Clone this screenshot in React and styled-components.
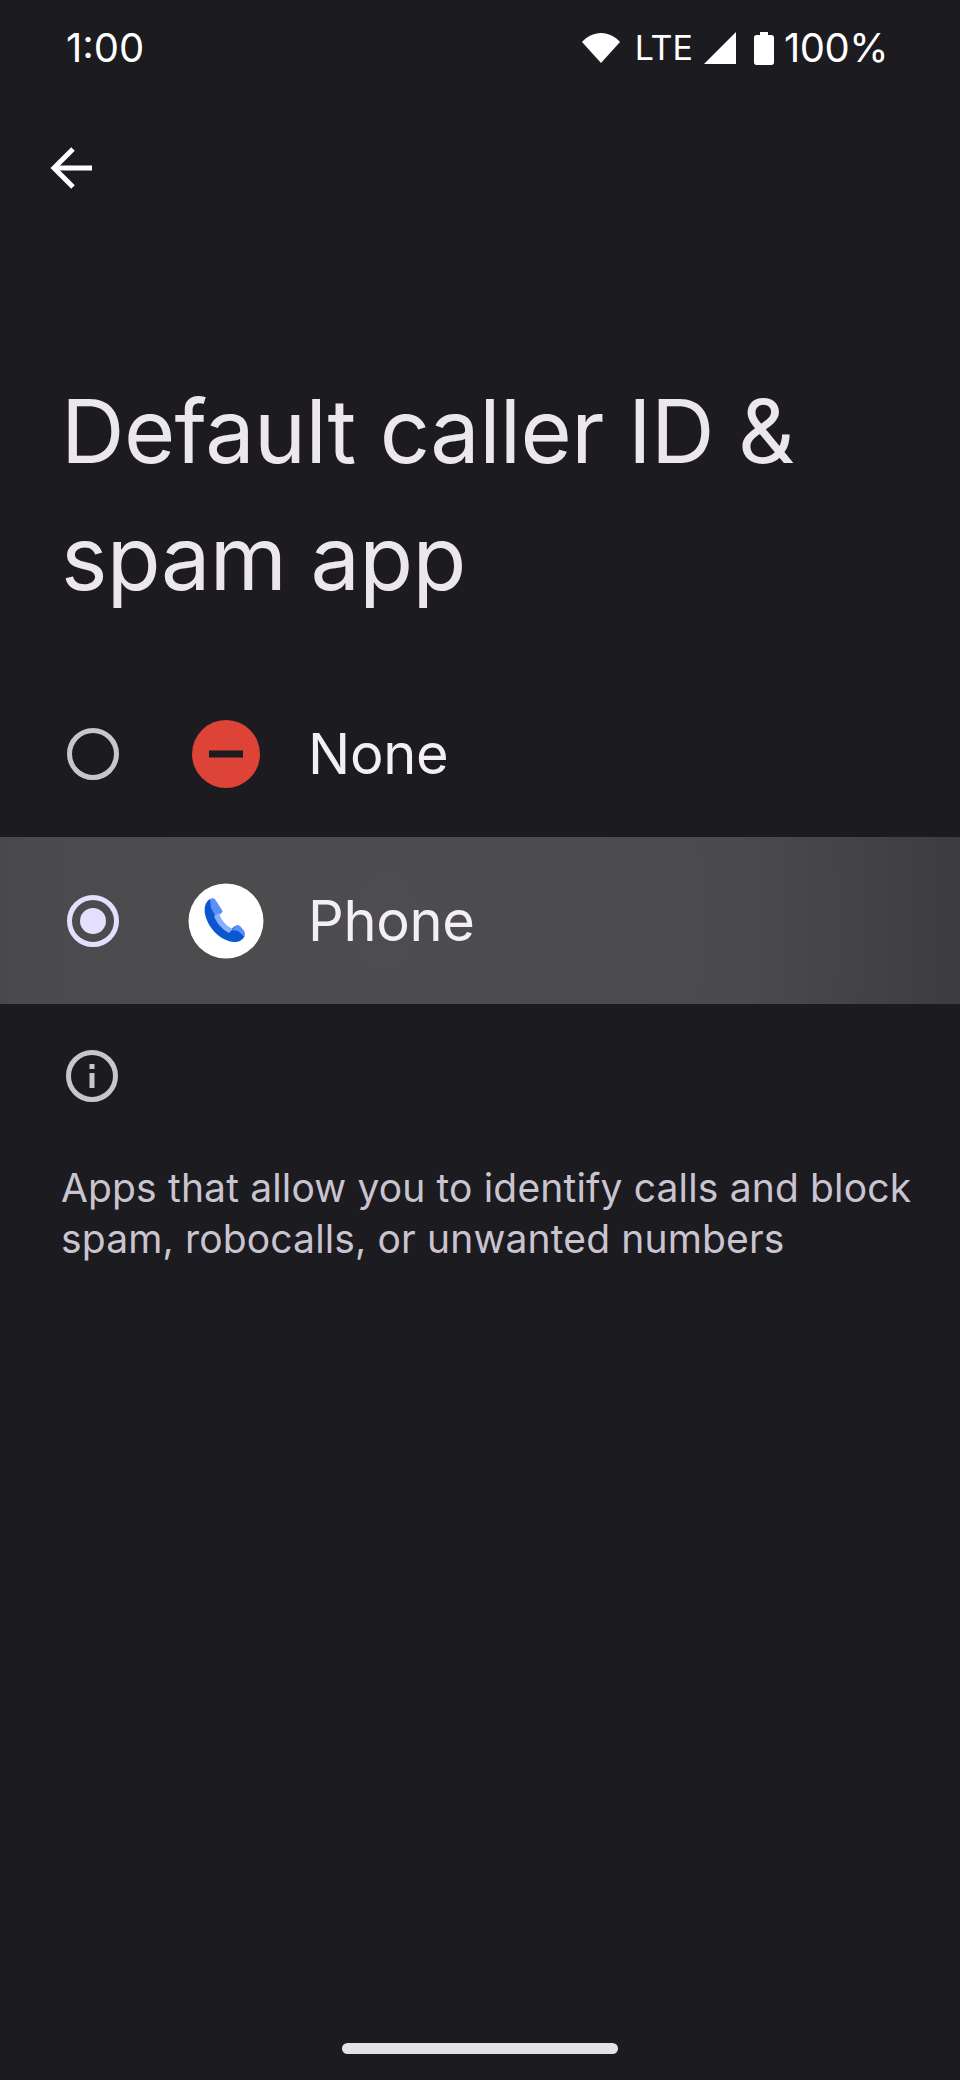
import styled, { createGlobalStyle } from "styled-components";

const GlobalStyle = createGlobalStyle`
  html, body {
    margin: 0;
    padding: 0;
    background: #1c1b20;
  }
`;

const Page = styled.div`
  width: 960px;
  height: 2080px;
  display: flex;
  flex-direction: column;
  background: #1c1b20;
  font-family: "Inter", "Liberation Sans", sans-serif;
  overflow: hidden;
`;

const StatusBar = styled.div`
  height: 96px;
  padding: 0 72px 0 66px;
  box-sizing: border-box;
  display: flex;
  align-items: center;
  justify-content: space-between;
  color: #fff;
  font-size: 40px;
  line-height: 48px;
`;

const StatusIcons = styled.div`
  display: flex;
  align-items: center;
`;

const Lte = styled.span`
  font-size: 34px;
  margin: 0 11px 0 15px;
`;

const Percent = styled.span`
  margin-left: 10px;
  letter-spacing: -0.5px;
`;

const BatterySlot = styled.div`
  display: flex;
  margin-left: 18px;
`;

const BackButton = styled.div`
  height: 72px;
  margin-top: 36px;
  padding: 0 0 0 50px;
  display: flex;
  align-items: center;
`;

const Title = styled.h1`
  margin: 164px 0 0;
  padding: 0 30px 0 61px;
  font-size: 88px;
  line-height: 127px;
  font-weight: 400;
  letter-spacing: -0.6px;
  color: #ece7ec;
`;

const List = styled.div`
  margin-top: 48px;
`;

const Row = styled.div`
  height: 167px;
  display: flex;
  align-items: center;
  background: ${(p) =>
    p.$active
      ? "radial-gradient(ellipse 590px 900px at 40% 50%, #4d4d4f 0%, #4b4b4d 60%, #3c3c3e 100%)"
      : "transparent"};
`;

const RadioSlot = styled.div`
  width: 186px;
  display: flex;
  justify-content: center;
`;

const Radio = styled.div`
  width: 52px;
  height: 52px;
  box-sizing: border-box;
  border-radius: 50%;
  border: 5px solid ${(p) => (p.$checked ? "#e3dffd" : "#c9c5ca")};
  display: flex;
  align-items: center;
  justify-content: center;
`;

const RadioDot = styled.div`
  width: 26px;
  height: 26px;
  border-radius: 50%;
  background: #e3dffd;
`;

const AppIcon = styled.div`
  width: 76px;
  height: 76px;
  margin-left: 2px;
  display: flex;
  align-items: center;
  justify-content: center;
`;

const RowLabel = styled.div`
  margin-left: 44px;
  font-size: 56px;
  font-weight: 400;
  letter-spacing: -0.3px;
  color: #f4eff4;
`;

const Footer = styled.div`
  padding: 0 0 0 66px;
  margin-top: 46px;
`;

const FooterText = styled.p`
  margin: 56px 0 0;
  padding: 0 20px 0 61px;
  font-size: 39px;
  line-height: 51px;
  font-weight: 400;
  letter-spacing: 0.15px;
  color: #cac4d0;
`;

const HomeArea = styled.div`
  margin-top: auto;
  padding-bottom: 26px;
  display: flex;
  justify-content: center;
`;

const HomeBar = styled.div`
  width: 276px;
  height: 11px;
  border-radius: 6px;
  background: #e6e1e5;
`;

function WifiIcon() {
  return (
    <svg width="38" height="30" viewBox="0 0 38 30">
      <path d="M0 9C5 3.5 11.5 0 19 0S33 3.5 38 9L19 30Z" fill="#fff" />
    </svg>
  );
}

function SignalIcon() {
  return (
    <svg width="32" height="32" viewBox="0 0 32 32">
      <path d="M32 0V32H0Z" fill="#fff" />
    </svg>
  );
}

function BatteryIcon() {
  return (
    <svg width="20" height="33" viewBox="0 0 20 33">
      <path
        d="M6 0H14V3H17.5C19 3 20 4 20 5.5V30.5C20 32 19 33 17.5 33H2.5C1 33 0 32 0 30.5V5.5C0 4 1 3 2.5 3H6Z"
        fill="#fff"
      />
    </svg>
  );
}

function BackIcon() {
  return (
    <svg width="42" height="42" viewBox="0 0 42 42" fill="none">
      <path d="M3 21H42" stroke="#fff" strokeWidth="5" />
      <path d="M23 2L4 21L23 40" stroke="#fff" strokeWidth="5" />
    </svg>
  );
}

function NoneIcon() {
  return (
    <svg width="68" height="68" viewBox="0 0 68 68">
      <circle cx="34" cy="34" r="34" fill="#dd4337" />
      <rect x="17" y="30.5" width="34" height="7" fill="#1c1b20" />
    </svg>
  );
}

function PhoneIcon() {
  return (
    <svg width="76" height="76" viewBox="0 0 76 76">
      <circle cx="38" cy="38" r="37.5" fill="#fff" />
      <path
        d="M22 16C17 19 15.5 26 17.5 33C21 46 33 58 46 59C50 59.5 54 57.5 56.5 53.5L47 43L41 48C35 45 30 39 27 33L33 28Z"
        fill="#0b57d0"
      />
      <path
        d="M22 16C24 14.5 26.5 15 27.5 17L34 27C35 28.5 34.5 29.5 33 30.5L28 34L23 25Z"
        fill="#5b8ffb"
      />
      <path
        d="M48 42.5C49.5 41.5 50.5 42 52 43L55.5 47C57 49 57.5 51.5 56.5 53.5L50 48L44 47Z"
        fill="#5b8ffb"
      />
      <path d="M26 33L31 30C33 37 38 43 45 46L41 50C34 46 28.5 40 26 33Z" fill="#8ab0fb" />
    </svg>
  );
}

function InfoIcon() {
  return (
    <svg width="52" height="52" viewBox="0 0 52 52" fill="none">
      <circle cx="26" cy="26" r="23.5" stroke="#c9c5ca" strokeWidth="5" />
      <rect x="23.5" y="23" width="5" height="15" fill="#c9c5ca" />
      <rect x="23.5" y="14" width="5" height="5" fill="#c9c5ca" />
    </svg>
  );
}

export default function App() {
  return (
    <Page>
      <GlobalStyle />
      <StatusBar>
        <span>1:00</span>
        <StatusIcons>
          <WifiIcon />
          <Lte>LTE</Lte>
          <SignalIcon />
          <BatterySlot>
            <BatteryIcon />
          </BatterySlot>
          <Percent>100%</Percent>
        </StatusIcons>
      </StatusBar>
      <BackButton>
        <BackIcon />
      </BackButton>
      <Title>
        Default caller ID &amp;
        <br />
        spam app
      </Title>
      <List>
        <Row>
          <RadioSlot>
            <Radio />
          </RadioSlot>
          <AppIcon>
            <NoneIcon />
          </AppIcon>
          <RowLabel>None</RowLabel>
        </Row>
        <Row $active>
          <RadioSlot>
            <Radio $checked>
              <RadioDot />
            </Radio>
          </RadioSlot>
          <AppIcon>
            <PhoneIcon />
          </AppIcon>
          <RowLabel>Phone</RowLabel>
        </Row>
      </List>
      <Footer>
        <InfoIcon />
      </Footer>
      <FooterText>
        Apps that allow you to identify calls and block spam, robocalls, or unwanted numbers
      </FooterText>
      <HomeArea>
        <HomeBar />
      </HomeArea>
    </Page>
  );
}
